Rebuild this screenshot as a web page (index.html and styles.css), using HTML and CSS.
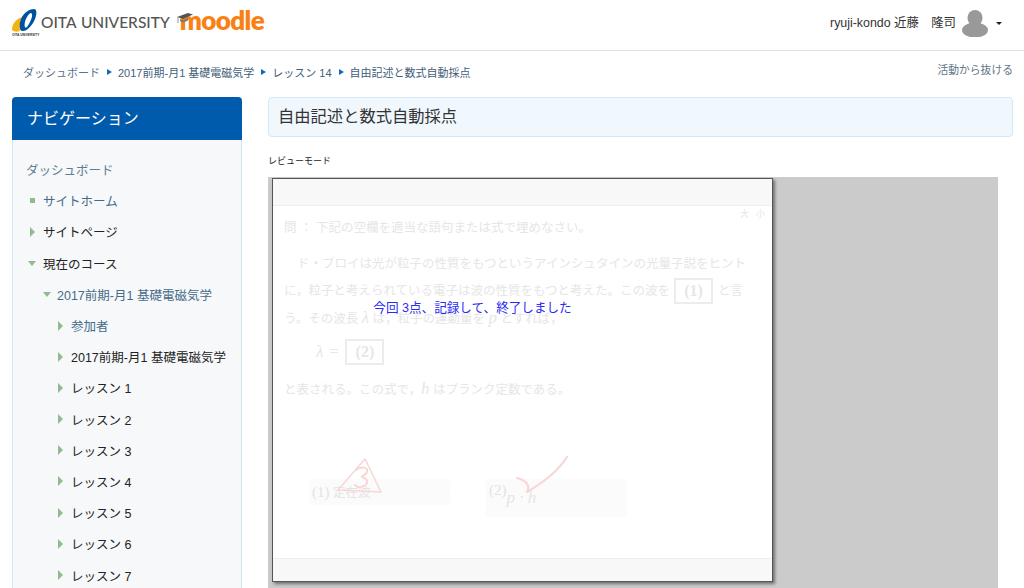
FILE: index.html
```html
<!DOCTYPE html>
<html lang="ja">
<head>
<meta charset="utf-8">
<title>自由記述と数式自動採点</title>
<link rel="stylesheet" href="styles.css">
</head>
<body>
<header class="topbar">
  <div class="brand">
    <div class="oita-mark">
      <svg width="26" height="24" viewBox="0 0 26 24">
        <path d="M0 21 C0 15 4 10 10 8 C8 12 7 17 8 22 C5 23 2 23 0 21 Z" fill="#f5b312"/>
        <path fill-rule="evenodd" d="M9 10 C12 3 18 0 22 0 C25 0 25 5 23 10 C20 17 14 23 10 22 C7 21 7 15 9 10 Z M15 8 C13 11 12 16 13 18 C14 20 16 17 18 13 C20 9 21 5 19 4 C18 4 16 6 15 8 Z" fill="#00519e"/>
      </svg>
      <span class="oita-mini">OITA UNIVERSITY</span>
    </div>
    <span class="oita-name">OITA UNIVERSITY</span>
    <div class="moodle-mark">
      <svg class="moodle-cap" width="16" height="13" viewBox="0 0 16 13">
        <path d="M0 4 L11 0 L16 1.5 L6 6 Z" fill="#555"/>
        <path d="M3 6 L6 7.5 L11 5 L11 7.5 L6 9.5 L3 8 Z" fill="#777"/>
        <path d="M1 4 L1 10" stroke="#999" stroke-width="1"/>
      </svg>
      <span class="moodle-name">moodle</span>
    </div>
  </div>
  <div class="usermenu">
    <span class="username">ryuji-kondo 近藤　隆司</span>
    <svg class="avatar" width="26" height="27" viewBox="0 0 26 27">
      <ellipse cx="13" cy="8" rx="7.5" ry="8" fill="#999"/>
      <ellipse cx="13" cy="20" rx="13" ry="7.5" fill="#999"/>
    </svg>
    <span class="caret"></span>
  </div>
</header>

<div class="crumbrow">
  <nav class="breadcrumb">
    <a class="crumb-first">ダッシュボード</a>
    <span class="sep"></span><a>2017前期-月1 基礎電磁気学</a>
    <span class="sep"></span><a>レッスン 14</a>
    <span class="sep"></span><a>自由記述と数式自動採点</a>
  </nav>
  <a class="leave">活動から抜ける</a>
</div>

<div class="columns">
  <aside class="navblock">
    <h2 class="navhead">ナビゲーション</h2>
    <ul class="navlist">
      <li class="lvl0 link light">ダッシュボード</li>
      <li class="lvl0 link"><span class="ico square"></span>サイトホーム</li>
      <li class="lvl0"><span class="ico right"></span>サイトページ</li>
      <li class="lvl0"><span class="ico down"></span>現在のコース</li>
      <li class="lvl1 link"><span class="ico down"></span>2017前期-月1 基礎電磁気学</li>
      <li class="lvl2 link"><span class="ico right"></span>参加者</li>
      <li class="lvl2"><span class="ico right"></span>2017前期-月1 基礎電磁気学</li>
      <li class="lvl2"><span class="ico right"></span>レッスン 1</li>
      <li class="lvl2"><span class="ico right"></span>レッスン 2</li>
      <li class="lvl2"><span class="ico right"></span>レッスン 3</li>
      <li class="lvl2"><span class="ico right"></span>レッスン 4</li>
      <li class="lvl2"><span class="ico right"></span>レッスン 5</li>
      <li class="lvl2"><span class="ico right"></span>レッスン 6</li>
      <li class="lvl2"><span class="ico right"></span>レッスン 7</li>
    </ul>
  </aside>

  <main class="content">
    <h1 class="pagetitle">自由記述と数式自動採点</h1>
    <p class="mode">レビューモード</p>
    <section class="stage">
      <div class="dialog">
        <div class="dialog-top"></div>
        <div class="dialog-body">
          <div class="faded">
            <div class="sizes"><span>大</span><span>小</span></div>
            <p class="q">問 ： 下記の空欄を適当な語句または式で埋めなさい。</p>
            <p class="para indent">ド・ブロイは光が粒子の性質をもつというアインシュタインの光量子説をヒント</p>
            <p class="para boxline">に，粒子と考えられている電子は波の性質をもつと考えた。この波を<span class="blank">(1)</span>と言</p>
            <p class="para third">う。その波長 <i class="m">λ</i> は，粒子の運動量を <i class="m">p</i> とすれば，</p>
            <p class="formula"><i class="m">λ</i> <span class="eq">=</span> <span class="blank">(2)</span></p>
            <p class="para after">と表される。この式で，<i class="m">h</i> はプランク定数である。</p>
            <div class="answers">
              <div class="ans one"><span class="num">(1)</span> 定在波</div>
              <div class="ans two"><span class="num raised">(2)</span><i class="m low">p · h</i></div>
            </div>
          </div>
          <svg class="marks" width="300" height="70" viewBox="0 0 300 70">
            <g fill="none" stroke="#f9d6d6" stroke-linecap="round" stroke-linejoin="round">
              <path d="M29 35 L56 4 L72 37 Z" stroke-width="1.5"/>
              <path d="M47 15 C52 11 60 12 58 17 C56 21 52 21 53 22 C60 24 60 30 52 32 C50 33 47 31 46 30" stroke-width="2"/>
              <path d="M208 23 C216 25 222 30 218 37 C230 30 248 18 258 2" stroke-width="2.2"/>
            </g>
          </svg>
        </div>
        <div class="dialog-bottom"></div>
        <div class="notice">今回 3点、記録して、終了しました</div>
      </div>
    </section>
  </main>
</div>
</body>
</html>
```

FILE: styles.css
```css
* { box-sizing: border-box; }
html, body { margin: 0; height: 588px; overflow: hidden; background: #fff; }
body { font-family: "Liberation Sans", "Noto Sans CJK JP", sans-serif; font-size: 12px; color: #333; }
p, h1, h2, ul { margin: 0; padding: 0; }

.topbar { height: 51px; border-bottom: 1px solid #e2e2e2; display: flex; justify-content: space-between; align-items: flex-start; padding-left: 12px; }
.brand { display: flex; align-items: flex-start; height: 50px; }
.oita-mark { width: 29px; padding-top: 9px; display: flex; flex-direction: column; align-items: flex-start; }
.oita-mark svg { display: block; }
.oita-mini { font-size: 3.2px; line-height: 4px; font-weight: 700; color: #333; white-space: nowrap; }
.oita-name { margin: 13px 0 0 0; font-family: "Lato", sans-serif; font-weight: 500; font-size: 15.5px; line-height: 19px; color: #555; word-spacing: 1px; white-space: nowrap; }
.moodle-mark { position: relative; margin-left: 7px; }
.moodle-cap { position: absolute; left: 0; top: 13px; }
.moodle-name { font-family: "Lato", sans-serif; font-weight: 800; font-size: 26px; line-height: 40px; letter-spacing: -.6px; color: #f98012; padding-left: 3px; }

.usermenu { display: flex; align-items: center; height: 50px; padding-right: 22px; }
.username { font-size: 12.4px; color: #333; margin-right: 6px; margin-top: -6px; }
.avatar { margin-top: -4px; }
.caret { margin: -3px 0 0 8px; border: 3px solid transparent; border-top: 3.5px solid #222; border-bottom: 0; }

.crumbrow { display: flex; justify-content: space-between; height: 46px; padding: 13px 11px 0 23px; }
.breadcrumb { display: flex; align-items: center; height: 16px; font-size: 11px; color: #3f5e78; white-space: nowrap; }
.crumb-first { color: #5a7186; }
.sep { margin: 0 6px 0 7px; border-left: 5px solid #0f6cbf; border-top: 3px solid transparent; border-bottom: 3px solid transparent; }
.leave { font-size: 10.8px; line-height: 14px; color: #5f7688; margin-top: -1px; }

.columns { display: flex; align-items: flex-start; padding-left: 12px; gap: 26px; }
.navblock { width: 230px; flex: none; background: #f6f8f9; border: 1px solid #d5e3ef; border-top: 0; border-radius: 4px 4px 0 0; }
.navhead { margin: 0 -1px; height: 43px; background: #005bac; border-radius: 4px 4px 0 0; color: #fff; font-size: 16px; font-weight: 400; line-height: 43px; padding-left: 15px; }
.navlist { list-style: none; padding-top: 14px; }
.navlist li { display: flex; align-items: center; height: 31.2px; font-size: 12.5px; color: #222; white-space: nowrap; }
.lvl0 { padding-left: 17px; }
.lvl1 { padding-left: 30px; }
.lvl2 { padding-left: 45px; }
.navlist li.link { color: #456b8a; }
.navlist li.light { padding-left: 13px; color: #5f7b92; }
.ico { flex: none; display: inline-block; }
.square { width: 5px; height: 5px; background: #8fbc8f; margin-right: 8px; }
.right { width: 0; border-left: 5px solid #8fbc8f; border-top: 5px solid transparent; border-bottom: 5px solid transparent; margin-right: 8px; }
.down { width: 0; border-top: 5px solid #8fbc8f; border-left: 4px solid transparent; border-right: 4px solid transparent; margin-right: 6px; }
.lvl0 .down { margin-left: -2px; margin-right: 7px; }

.content { width: 745px; flex: none; }
.pagetitle { height: 40px; background: #f0f7fd; border: 1px solid #d5e8f7; border-radius: 4px; font-size: 16.3px; font-weight: 400; line-height: 37px; padding-left: 9px; color: #333; }
.mode { font-size: 9px; line-height: 12px; color: #222; margin-top: 18px; }
.stage { width: 730px; height: 420px; margin-top: 10px; background: #cbcbcb; padding: 1px 0 0 4px; }

.dialog { position: relative; width: 501px; height: 404px; background: #fff; border: 1px solid #555; box-shadow: 2px 2px 3px rgba(0,0,0,.45); display: flex; flex-direction: column; }
.dialog-top { height: 27px; flex: none; background: #f8f8f8; border-bottom: 1px solid #eee; }
.dialog-bottom { height: 23px; flex: none; background: #f8f8f8; border-top: 1px solid #eee; }
.dialog-body { flex: 1; position: relative; padding: 0 11px; }
.faded { color: #e6e6e6; font-size: 12.5px; line-height: 20px; }
.m { font-family: "Liberation Serif", serif; font-size: 17px; line-height: 14px; color: #e6e6e6; }
.sizes { display: flex; justify-content: flex-end; gap: 7px; font-size: 9px; line-height: 12px; padding: 2px 0 0; margin-right: -4px; height: 12px; }
.para { white-space: nowrap; }
.indent { padding-left: 13px; margin-top: 16px; }
.boxline { margin-top: 4px; height: 26px; display: flex; align-items: center; white-space: pre; }
.third { margin-top: 5px; }
.blank { display: inline-block; width: 39px; height: 26px; border: 2px solid #ececec; font-family: "Liberation Serif", serif; font-size: 16px; font-weight: 700; line-height: 22px; text-align: center; margin: 0 5px 0 4px; color: #e6e6e6; }
.formula { display: flex; align-items: center; margin: 10px 0 0 32px; height: 26px; color: #e6e6e6; font-family: "Liberation Serif", serif; font-size: 16px; }
.formula .eq { margin: 0 7px 0 6px; }
.formula .blank { margin: 0; }
.after { margin-top: 15px; }
.answers { display: flex; gap: 36px; margin: 79px 0 0 25px; align-items: flex-start; }
.ans { width: 141px; background: #fbfbfb; border-radius: 3px; padding: 3px; color: #e4e4e4; font-size: 12.5px; line-height: 20px; }
.ans.one { height: 26px; }
.ans.two { height: 38px; }
.num { font-family: "Liberation Serif", serif; font-size: 15px; }
.raised { position: relative; top: -2px; }
.low { position: relative; top: 6px; }
.marks { position: absolute; left: 36px; top: 249px; }
.notice { position: absolute; left: 0; right: 100px; top: 120px; text-align: center; font-size: 12.6px; line-height: 18px; color: #2a2af5; }
```
